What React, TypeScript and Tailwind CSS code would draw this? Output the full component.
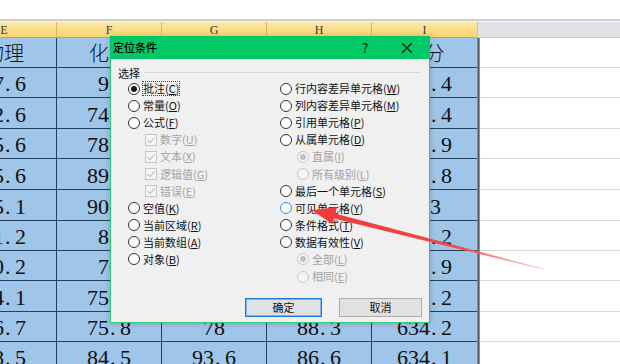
import React from "react";

const CJK = "font-['Noto_Sans_CJK_SC',sans-serif]";
const SERIF = "font-['Liberation_Serif',serif]";

const colLetters = ["E", "F", "G", "H", "I"];

const data: string[][] = [
  ["物理", "化学", "", "", "总分"],
  ["87.6", "95", "", "", "634.4"],
  ["82.6", "74.5", "", "", "624.4"],
  ["85.6", "78.5", "", "", "640.9"],
  ["85.6", "89.5", "", "", "650.8"],
  ["75.1", "90.5", "", "", "633"],
  ["81.2", "85", "", "", "612.2"],
  ["90.2", "76", "", "", "618.9"],
  ["84.1", "75.5", "", "", "620.2"],
  ["86.7", "75.8", "78", "88.3", "634.2"],
  ["88.5", "84.5", "93.6", "86.6", "634.1"],
];

const rowH = ["h-[30px]", "h-[30px]", "h-[31px]", "h-[30px]", "h-[31px]", "h-[31px]", "h-[30px]", "h-[30px]", "h-[31px]", "h-[30px]", "h-[30px]"];

type Item = {
  label: string;
  key: string;
  kind: "radio" | "check";
  indent?: boolean;
  disabled?: boolean;
  checked?: boolean;
  hover?: boolean;
  focus?: boolean;
};

const left: Item[] = [
  { label: "批注", key: "C", kind: "radio", checked: true, focus: true },
  { label: "常量", key: "O", kind: "radio" },
  { label: "公式", key: "F", kind: "radio" },
  { label: "数字", key: "U", kind: "check", indent: true, disabled: true, checked: true },
  { label: "文本", key: "X", kind: "check", indent: true, disabled: true, checked: true },
  { label: "逻辑值", key: "G", kind: "check", indent: true, disabled: true, checked: true },
  { label: "错误", key: "E", kind: "check", indent: true, disabled: true, checked: true },
  { label: "空值", key: "K", kind: "radio" },
  { label: "当前区域", key: "R", kind: "radio" },
  { label: "当前数组", key: "A", kind: "radio" },
  { label: "对象", key: "B", kind: "radio" },
];

const right: Item[] = [
  { label: "行内容差异单元格", key: "W", kind: "radio" },
  { label: "列内容差异单元格", key: "M", kind: "radio" },
  { label: "引用单元格", key: "P", kind: "radio" },
  { label: "从属单元格", key: "D", kind: "radio" },
  { label: "直属", key: "I", kind: "radio", indent: true, disabled: true, checked: true },
  { label: "所有级别", key: "L", kind: "radio", indent: true, disabled: true },
  { label: "最后一个单元格", key: "S", kind: "radio" },
  { label: "可见单元格", key: "Y", kind: "radio", hover: true },
  { label: "条件格式", key: "T", kind: "radio" },
  { label: "数据有效性", key: "V", kind: "radio" },
  { label: "全部", key: "L", kind: "radio", indent: true, disabled: true, checked: true },
  { label: "相同", key: "E", kind: "radio", indent: true, disabled: true },
];

function Control({ it }: { it: Item }) {
  if (it.kind === "check") {
    return (
      <div className="w-[12px] h-[12px] border border-[#c6c6c6] bg-[#f7f7f7] flex items-center justify-center shrink-0">
        <svg width="10" height="10" viewBox="0 0 10 10">
          <path d="M1.5 5.2 L4 7.6 L8.6 2.4" fill="none" stroke="#c2c2c2" strokeWidth="1.2" />
        </svg>
      </div>
    );
  }
  const border = it.disabled ? "border-[#c8c8c8] bg-[#f4f4f4]" : it.hover ? "border-[#3a8ee0] bg-white" : "border-[#333333] bg-white";
  const dot = it.disabled ? "bg-[#c2c2c2]" : "bg-[#1a1a1a]";
  return (
    <div className={`w-[12px] h-[12px] rounded-full border ${border} flex items-center justify-center shrink-0`}>
      {it.checked && <div className={`w-[6px] h-[6px] rounded-full ${dot}`} />}
    </div>
  );
}

function Row({ it }: { it: Item }) {
  const color = it.disabled ? "text-[#a3a3a3]" : "text-[#111111]";
  return (
    <div className={`h-[17.1px] flex items-center ${it.indent ? "pl-[17px]" : ""}`}>
      <Control it={it} />
      <span
        className={`${color} text-[11px] leading-[13px] whitespace-nowrap ${
          it.focus ? "ml-[2px] border border-dotted border-[#444]" : "ml-[3px]"
        }`}
      >
        {it.label}
        <span>
          (<span className="underline underline-offset-1">{it.key}</span>)
        </span>
      </span>
    </div>
  );
}

function Num({ v }: { v: string }) {
  const parts = v.split(".");
  if (parts.length === 1) return <>{v}</>;
  return (
    <>
      {parts[0]}
      <span className="inline-block w-[11px] pl-[1px]">.</span>
      {parts[1]}
    </>
  );
}

function Dialog() {
  return (
    <div className={`absolute left-[110px] top-[36px] w-[320px] ${CJK} shadow-[0_1px_6px_rgba(0,0,0,0.18)]`}>
      <div className="h-[23px] bg-[#03c866] flex items-center pl-[3px]">
        <span className="text-[11px] font-medium text-black leading-none">定位条件</span>
        <div className="flex-1" />
        <span className="text-[13px] text-[#111] leading-none w-[12px] text-center mr-[30px]">?</span>
        <svg width="12" height="12" viewBox="0 0 12 12" className="mr-[17px]">
          <path d="M1 1 L11 11 M11 1 L1 11" stroke="#111" strokeWidth="1.1" />
        </svg>
      </div>
      <div className="bg-[#f0f0f0] border-x border-b border-[#2fca78] pb-[5px]">
        <div className="h-[21px] pt-[6px] flex items-center pl-[7px] pr-[8px]">
          <span className="text-[11px] leading-[14px] text-[#111]">选择</span>
          <div className="flex-1 h-px bg-[#d9d9d9] ml-[4px]" />
        </div>
        <div className="flex pl-[17px]">
          <div className="w-[152px] flex flex-col">
            {left.map((it, i) => (
              <Row key={i} it={it} />
            ))}
          </div>
          <div className="flex flex-col">
            {right.map((it, i) => (
              <Row key={i} it={it} />
            ))}
          </div>
        </div>
        <div className="mt-[13px] flex justify-end pr-[7px] gap-[17px]">
          <div className="w-[77px] h-[19px] bg-[#e1e1e1] border border-[#1c7ad6] shadow-[inset_0_0_0_1px_#7fb5ea] flex items-center justify-center text-[11px] text-[#111]">
            确定
          </div>
          <div className="w-[83px] h-[19px] bg-[#e1e1e1] border border-[#adadad] flex items-center justify-center text-[11px] text-[#111]">
            取消
          </div>
        </div>
      </div>
    </div>
  );
}

function Arrow() {
  return (
    <svg className="absolute inset-0 pointer-events-none" width="620" height="364" viewBox="0 0 620 364">
      <defs>
        <linearGradient id="ag" x1="330" y1="215" x2="543" y2="269" gradientUnits="userSpaceOnUse">
          <stop offset="0" stopColor="#f23a3a" />
          <stop offset="0.6" stopColor="#f44848" />
          <stop offset="1" stopColor="#ff9a9a" stopOpacity="0.5" />
        </linearGradient>
      </defs>
      <polygon points="329.9,217.4 331.1,212.4 543.1,268.5 542.9,269.5" fill="url(#ag)" />
      <polygon points="311.5,210 337,207.2 332.6,224.3" fill="#f23a3a" />
    </svg>
  );
}

export default function App() {
  return (
    <div className="relative w-[620px] h-[364px] overflow-hidden bg-white">
      <div className="h-[19px] bg-white" />
      <div className="h-[2px] bg-[#cfcfcf]" />
      <div className="h-[1px] bg-[#f4f4f4]" />
      {/* header */}
      <div className="flex h-[16px]">
        <div className="flex -ml-[48px] border-b border-[#c9a24a] bg-linear-to-b from-[#fde9a8] to-[#f7d36f]">
          {colLetters.map((c, i) => (
            <div
              key={c}
              className={`w-[105px] h-full flex items-center justify-center ${SERIF} text-[12px] text-[#3a3a3a] ${
                i < 4 ? "border-r border-[#d9b866]" : ""
              }`}
            >
              {c}
            </div>
          ))}
        </div>
        <div className="w-[1px] bg-[#c4c4c4]" />
        <div className="flex-1 bg-[#dfe3e8] border-b border-[#c6cad0]" />
      </div>
      {/* rows */}
      {data.map((row, r) => (
        <div key={r} className={`flex ${rowH[r]}`}>
          <div className="flex -ml-[48px] bg-[#9fc5e8] border-b border-[#24405f]">
            {row.map((v, i) => (
              <div
                key={i}
                className={`w-[105px] h-full flex items-end justify-center pb-[1px] text-[#111] whitespace-nowrap ${
                  i < 4 ? "border-r border-[#24405f]" : ""
                } ${r === 0 ? `${CJK} font-light text-[20px] leading-[26px]` : `${SERIF} text-[22px] leading-[24px]`}`}
              >
                {r === 0 ? v : <Num v={v} />}
              </div>
            ))}
          </div>
          <div className="w-[3px] bg-linear-to-r from-[#9c9c9c] via-[#5c5c5c] to-[#a8a8a8]" />
          <div className="flex-1 border-b border-[#dadada]" />
        </div>
      ))}
      <Dialog />
      <Arrow />
    </div>
  );
}
